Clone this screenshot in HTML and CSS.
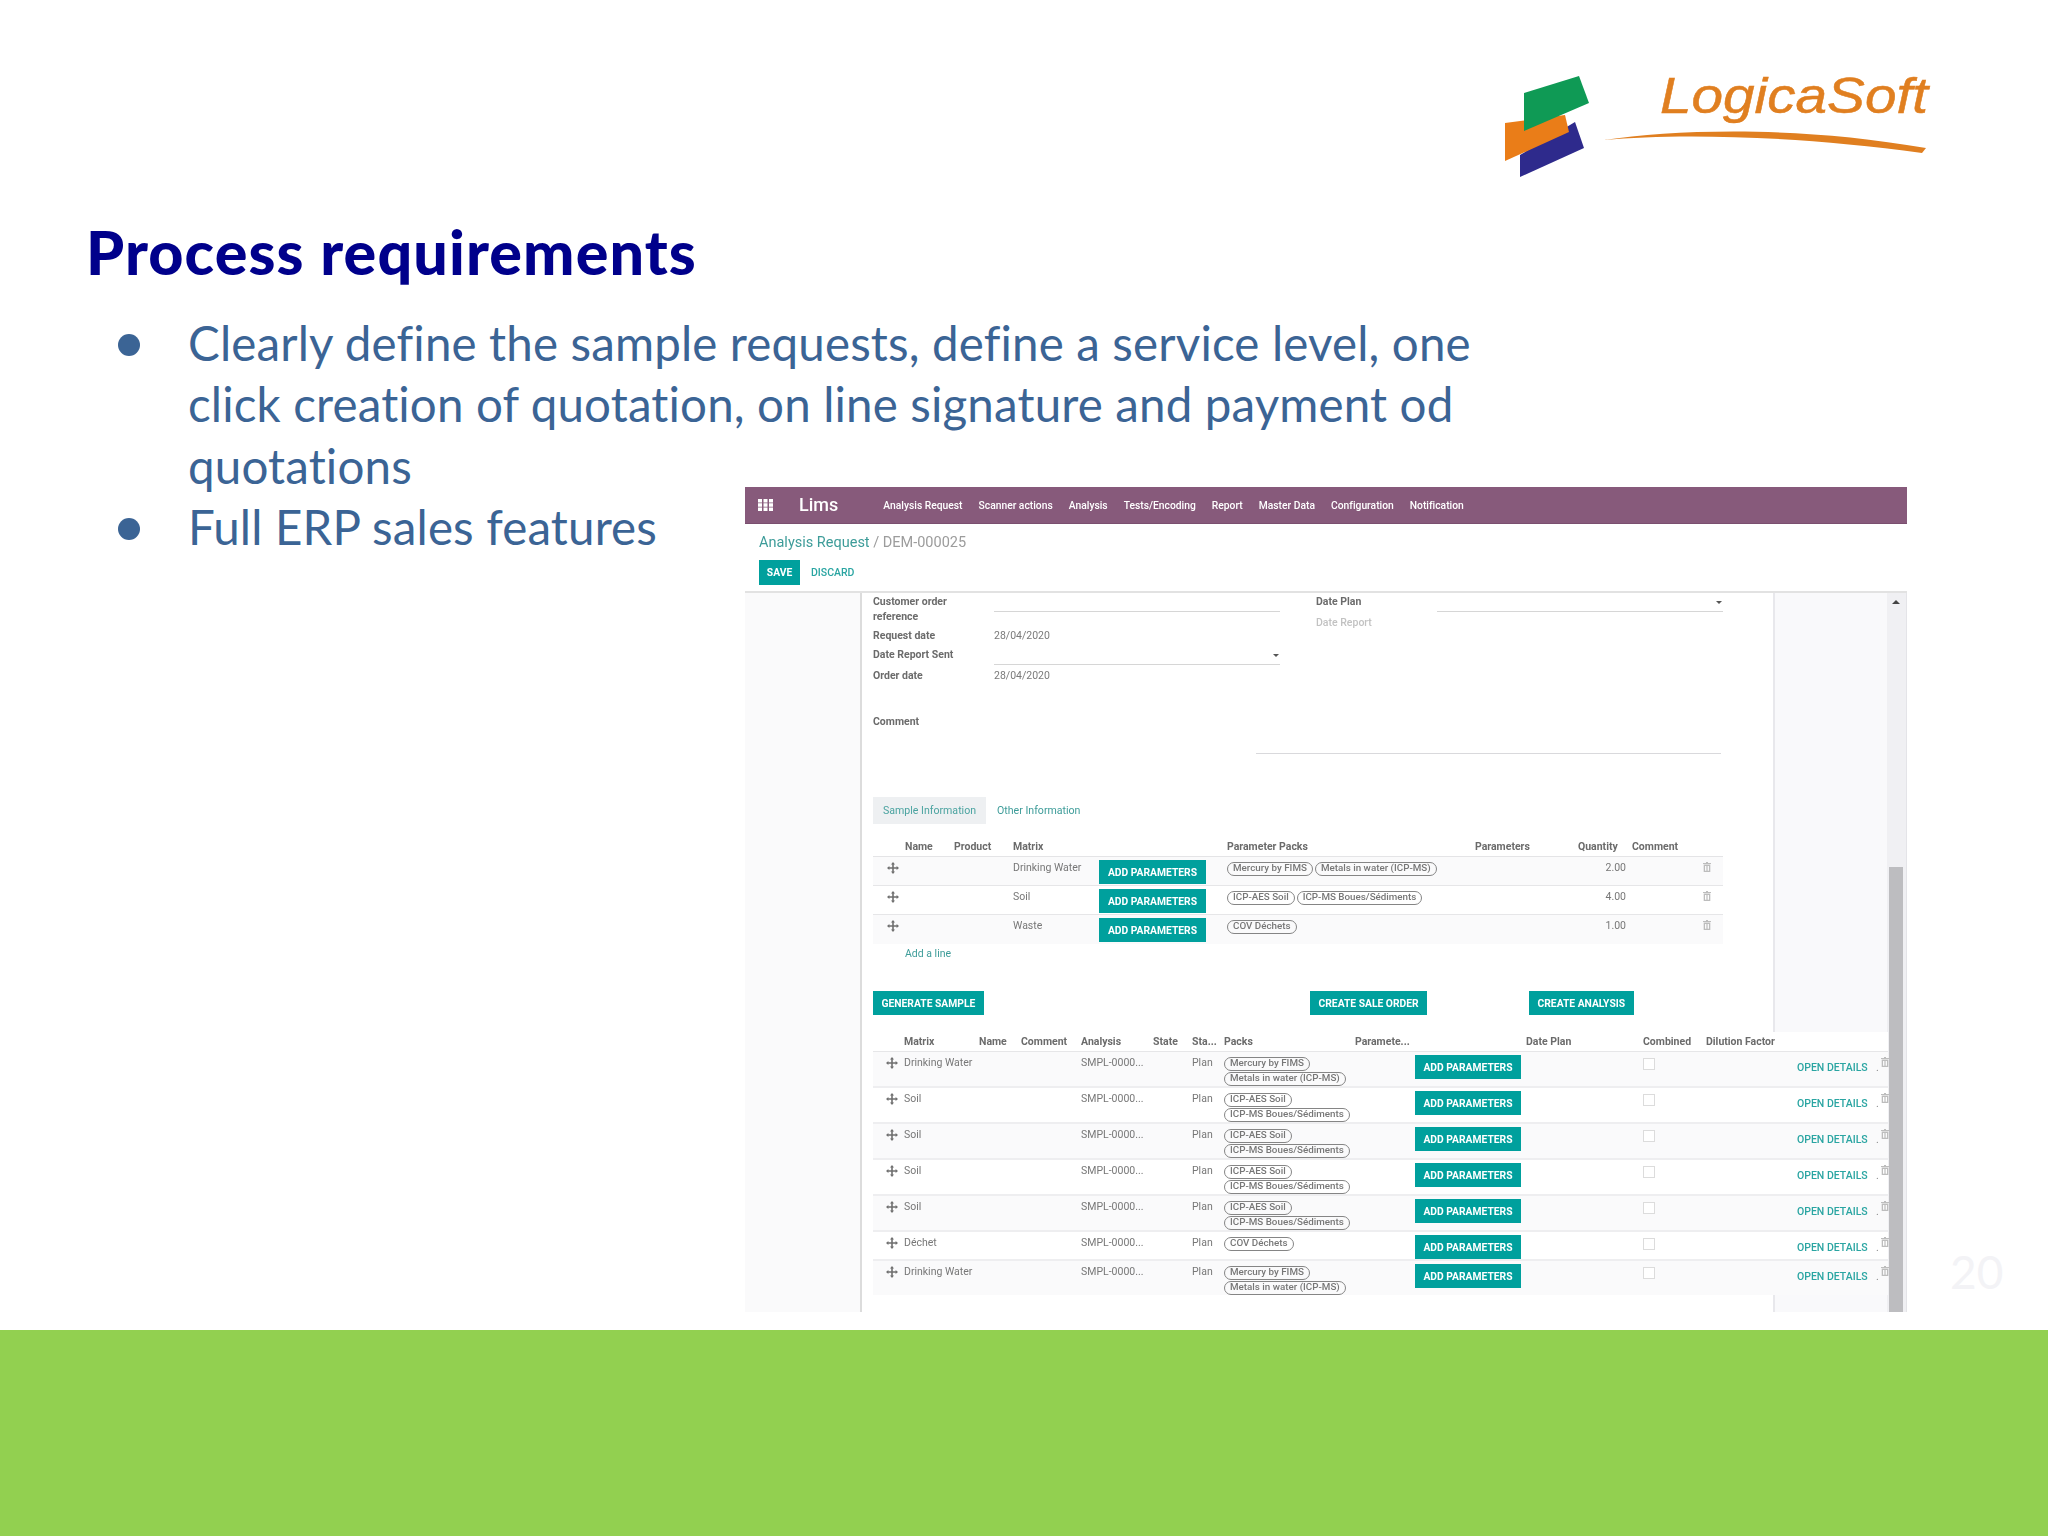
FILE: index.html
```html
<!DOCTYPE html>
<html lang="en">
<head>
<meta charset="utf-8">
<title>Process requirements</title>
<link rel="stylesheet" href="styles.css">
</head>
<body>
<svg class="defs" width="0" height="0" aria-hidden="true">
  <symbol id="move" viewBox="0 0 12 12"><path d="M6 0 8 2.4H6.8V5.2H9.6V4L12 6 9.6 8V6.8H6.8V9.6H8L6 12 4 9.6H5.2V6.8H2.4V8L0 6 2.4 4V5.2H5.2V2.4H4Z"/></symbol>
  <symbol id="trash" viewBox="0 0 8 10"><path d="M3 0H5V1H8V2H0V1H3ZM.7 2.6H7.3V10H.7ZM2 4V8.8H3V4ZM3.6 4V8.8H4.4V4ZM5 4V8.8H6V4Z" fill-rule="evenodd"/></symbol>
</svg>
<main class="slide">
  <section class="stage">
    <div class="logo-row">
      <svg class="logo" viewBox="0 0 440 115" width="440" height="115" role="img" aria-label="LogicaSoft">
        <polygon points="75,52 84,78 20,107 20,85" fill="#2e2a8c"/>
        <polygon points="5,53 65,45 69,62 5,91" fill="#ea7d18"/>
        <polygon points="24,23 79,6 89,33 24,61" fill="#0f9a55"/>
        <text x="160" y="43" class="logo-text" textLength="268" lengthAdjust="spacingAndGlyphs">LogicaSoft</text>
        <path d="M104 70C180 59 300 56 426 78L422 83C300 66 180 63 104 70Z" fill="#e07f20"/>
      </svg>
    </div>
    <h1 class="title">Process requirements</h1>
    <ul class="points">
      <li class="point">Clearly define the sample requests, define a service level, one<br>click creation of quotation, on line signature and payment od<br>quotations</li>
      <li class="point">Full ERP sales features</li>
    </ul>

    <div class="window">
      <nav class="navbar">
        <svg class="apps" viewBox="0 0 15 12" width="15" height="12"><path d="M0 0h4v3.4H0zM5.5 0h4v3.4h-4zM11 0h4v3.4h-4zM0 4.3h4v3.4H0zM5.5 4.3h4v3.4h-4zM11 4.3h4v3.4h-4zM0 8.6h4V12H0zM5.5 8.6h4V12h-4zM11 8.6h4V12h-4z" fill="#fff"/></svg>
        <span class="brand">Lims</span>
        <span class="menu">Analysis Request</span>
        <span class="menu">Scanner actions</span>
        <span class="menu">Analysis</span>
        <span class="menu">Tests/Encoding</span>
        <span class="menu">Report</span>
        <span class="menu">Master Data</span>
        <span class="menu">Configuration</span>
        <span class="menu">Notification</span>
      </nav>
      <div class="control">
        <div class="crumbs"><span class="crumb-link">Analysis Request</span> / DEM-000025</div>
        <div class="actions"><span class="btn btn-save">SAVE</span><span class="discard">DISCARD</span></div>
      </div>
      <div class="view">
        <div class="gutter-left"></div>
        <div class="sheet">
          <div class="form">
            <div class="form-col">
              <div class="f-row f-row-a"><span class="label">Customer order<br>reference</span><span class="field field-line"></span></div>
              <div class="f-row f-row-b"><span class="label">Request date</span><span class="value">28/04/2020</span></div>
              <div class="f-row f-row-b"><span class="label">Date Report Sent</span><span class="field field-line field-drop"><i class="caret"></i></span></div>
              <div class="f-row f-row-c"><span class="label">Order date</span><span class="value">28/04/2020</span></div>
            </div>
            <div class="form-col">
              <div class="f-row f-row-d"><span class="label">Date Plan</span><span class="field field-line field-drop"><i class="caret"></i></span></div>
              <div class="f-row"><span class="label label-muted">Date Report</span></div>
            </div>
          </div>
          <div class="comment"><span class="label">Comment</span><span class="comment-line"></span></div>
          <div class="tabs"><span class="tab tab-active">Sample Information</span><span class="tab">Other Information</span></div>

          <div class="tbl-a">
            <div class="ra ra-head"><span></span><span>Name</span><span>Product</span><span>Matrix</span><span></span><span>Parameter Packs</span><span>Parameters</span><span>Quantity</span><span>Comment</span><span></span></div>
            <div class="ra ra-row"><svg class="move"><use href="#move"/></svg><span></span><span></span><span class="txt">Drinking Water</span><span class="btn btn-add">ADD PARAMETERS</span><span class="pills-inline"><span class="pill">Mercury by FIMS</span><span class="pill">Metals in water (ICP-MS)</span></span><span></span><span class="txt num">2.00</span><span></span><svg class="trash"><use href="#trash"/></svg></div>
            <div class="ra ra-row"><svg class="move"><use href="#move"/></svg><span></span><span></span><span class="txt">Soil</span><span class="btn btn-add">ADD PARAMETERS</span><span class="pills-inline"><span class="pill">ICP-AES Soil</span><span class="pill">ICP-MS Boues/Sédiments</span></span><span></span><span class="txt num">4.00</span><span></span><svg class="trash"><use href="#trash"/></svg></div>
            <div class="ra ra-row"><svg class="move"><use href="#move"/></svg><span></span><span></span><span class="txt">Waste</span><span class="btn btn-add">ADD PARAMETERS</span><span class="pills-inline"><span class="pill">COV Déchets</span></span><span></span><span class="txt num">1.00</span><span></span><svg class="trash"><use href="#trash"/></svg></div>
            <div class="add-line">Add a line</div>
          </div>

          <div class="gen-row"><span class="btn btn-gen">GENERATE SAMPLE</span><span class="btn btn-gen">CREATE SALE ORDER</span><span class="btn btn-gen">CREATE ANALYSIS</span></div>

          <div class="tbl-b">
            <div class="rb rb-head"><span></span><span>Matrix</span><span>Name</span><span>Comment</span><span>Analysis</span><span>State</span><span>Sta...</span><span>Packs</span><span>Paramete...</span><span></span><span>Date Plan</span><span>Combined</span><span>Dilution Factor</span></div>
            <div class="rb rb-row"><svg class="move"><use href="#move"/></svg><span class="txt">Drinking Water</span><span></span><span></span><span class="txt">SMPL-0000...</span><span></span><span class="txt">Plan</span><span class="pills"><span class="pill">Mercury by FIMS</span><span class="pill">Metals in water (ICP-MS)</span></span><span></span><span class="btn btn-add">ADD PARAMETERS</span><span></span><i class="check"></i><span></span><span class="open">OPEN DETAILS</span><span class="dot">.</span><svg class="trash"><use href="#trash"/></svg></div>
            <div class="rb rb-row"><svg class="move"><use href="#move"/></svg><span class="txt">Soil</span><span></span><span></span><span class="txt">SMPL-0000...</span><span></span><span class="txt">Plan</span><span class="pills"><span class="pill">ICP-AES Soil</span><span class="pill">ICP-MS Boues/Sédiments</span></span><span></span><span class="btn btn-add">ADD PARAMETERS</span><span></span><i class="check"></i><span></span><span class="open">OPEN DETAILS</span><span class="dot">.</span><svg class="trash"><use href="#trash"/></svg></div>
            <div class="rb rb-row"><svg class="move"><use href="#move"/></svg><span class="txt">Soil</span><span></span><span></span><span class="txt">SMPL-0000...</span><span></span><span class="txt">Plan</span><span class="pills"><span class="pill">ICP-AES Soil</span><span class="pill">ICP-MS Boues/Sédiments</span></span><span></span><span class="btn btn-add">ADD PARAMETERS</span><span></span><i class="check"></i><span></span><span class="open">OPEN DETAILS</span><span class="dot">.</span><svg class="trash"><use href="#trash"/></svg></div>
            <div class="rb rb-row"><svg class="move"><use href="#move"/></svg><span class="txt">Soil</span><span></span><span></span><span class="txt">SMPL-0000...</span><span></span><span class="txt">Plan</span><span class="pills"><span class="pill">ICP-AES Soil</span><span class="pill">ICP-MS Boues/Sédiments</span></span><span></span><span class="btn btn-add">ADD PARAMETERS</span><span></span><i class="check"></i><span></span><span class="open">OPEN DETAILS</span><span class="dot">.</span><svg class="trash"><use href="#trash"/></svg></div>
            <div class="rb rb-row"><svg class="move"><use href="#move"/></svg><span class="txt">Soil</span><span></span><span></span><span class="txt">SMPL-0000...</span><span></span><span class="txt">Plan</span><span class="pills"><span class="pill">ICP-AES Soil</span><span class="pill">ICP-MS Boues/Sédiments</span></span><span></span><span class="btn btn-add">ADD PARAMETERS</span><span></span><i class="check"></i><span></span><span class="open">OPEN DETAILS</span><span class="dot">.</span><svg class="trash"><use href="#trash"/></svg></div>
            <div class="rb rb-row"><svg class="move"><use href="#move"/></svg><span class="txt">Déchet</span><span></span><span></span><span class="txt">SMPL-0000...</span><span></span><span class="txt">Plan</span><span class="pills"><span class="pill">COV Déchets</span></span><span></span><span class="btn btn-add">ADD PARAMETERS</span><span></span><i class="check"></i><span></span><span class="open">OPEN DETAILS</span><span class="dot">.</span><svg class="trash"><use href="#trash"/></svg></div>
            <div class="rb rb-row"><svg class="move"><use href="#move"/></svg><span class="txt">Drinking Water</span><span></span><span></span><span class="txt">SMPL-0000...</span><span></span><span class="txt">Plan</span><span class="pills"><span class="pill">Mercury by FIMS</span><span class="pill">Metals in water (ICP-MS)</span></span><span></span><span class="btn btn-add">ADD PARAMETERS</span><span></span><i class="check"></i><span></span><span class="open">OPEN DETAILS</span><span class="dot">.</span><svg class="trash"><use href="#trash"/></svg></div>
          </div>
        </div>
        <div class="gutter-right"></div>
        <div class="scrollbar"><i class="scroll-up"></i><div class="thumb"></div></div>
      </div>
    </div>
    <span class="page-no">20</span>
  </section>
  <footer class="band"></footer>
</main>
</body>
</html>
```

FILE: styles.css
```css
* { box-sizing: border-box; }
html, body { margin: 0; padding: 0; background: #fff; }
.defs { position: absolute; }

.slide { width: 2048px; height: 1536px; display: flex; flex-direction: column; overflow: hidden; font-family: Lato, "Liberation Sans", sans-serif; font-variant-ligatures: none; }
.stage { height: 1330px; position: relative; background: #fff; }
.band { flex: 1; background: #92d050; }

.logo-row { display: flex; justify-content: flex-end; padding: 70px 108px 0 0; height: 185px; }
.logo { display: block; overflow: visible; }
.logo-text { font-family: "Liberation Sans", sans-serif; font-style: italic; font-size: 50px; fill: #e07f20; stroke: #e07f20; stroke-width: .5px; }

.title { margin: 32px 0 0 86px; font-size: 61px; line-height: 70px; font-weight: 900; color: #00008b; letter-spacing: 1.1px; }
.points { list-style: none; margin: 25px 0 0; padding: 0 0 0 188px; font-size: 47.5px; line-height: 61.4px; letter-spacing: .15px; color: #3b6495; }
.point { position: relative; }
.point::before { content: ""; position: absolute; left: -70px; top: 22px; width: 22px; height: 22px; border-radius: 50%; background: #3b6495; }

.page-no { position: absolute; left: 1950px; top: 1244px; font-size: 46px; line-height: 56px; color: #f3f3f6; }

.window { position: absolute; left: 745px; top: 487px; width: 1162px; height: 826px; display: flex; flex-direction: column; background: #fff; font-family: Roboto, "Liberation Sans", sans-serif; filter: blur(.45px); }

.navbar { height: 37px; background: #875a7b; display: flex; align-items: center; padding-left: 13px; color: #fff; border-bottom: 1px solid #7a4f6f; }
.apps { display: block; }
.brand { font-size: 18px; line-height: 22px; font-weight: 500; margin: 0 45px 0 26px; }
.menu { font-size: 10.3px; font-weight: 500; margin-right: 16px; }

.control { height: 69px; padding: 10px 0 0 14px; border-bottom: 2px solid #e2e2e2; }
.crumbs { font-size: 14.5px; line-height: 18px; color: #9c9c9c; }
.crumb-link { color: #3d9c99; }
.actions { display: flex; align-items: center; margin-top: 8px; }
.btn { display: flex; align-items: center; justify-content: center; background: #00a09d; color: #fff; font-size: 10.3px; font-weight: 700; white-space: nowrap; }
.btn-save { width: 41px; height: 25px; }
.discard { margin-left: 11px; font-size: 10.5px; font-weight: 500; color: #2aa5a2; }

.view { height: 719px; display: grid; grid-template-columns: 115px 913px 114px 20px; }
.gutter-left { background: #fafafb; }
.gutter-right { background: #f9f9fb; border-left: 2px solid #e8e8ec; }
.sheet { z-index: 1; border-left: 2px solid #dcdcdc; padding-left: 11px; font-size: 10.5px; color: #777; }

.scrollbar { background: #f0f0f3; padding: 0 0 0 2px; border-right: 1px solid #e4e4e8; }
.scroll-up { display: block; width: 0; height: 0; margin: 7px 0 0 3px; border: 4px solid transparent; border-top: 0; border-bottom: 4px solid #444; }
.thumb { margin-top: 263px; width: 14px; height: 445px; background: #bdbdc0; }

.form { display: flex; gap: 36px; }
.form-col { display: flex; flex-direction: column; }
.form-col:first-child { width: 407px; }
.form-col:last-child { width: 407px; }
.f-row { display: flex; align-items: flex-start; }
.f-row-a { height: 33px; padding-top: 1px; }
.f-row-b { height: 19px; padding-top: 2px; }
.f-row-c { height: 21px; padding-top: 4px; }
.f-row-d { height: 22px; padding-top: 1px; }
.label { width: 121px; flex: none; font-size: 10.5px; line-height: 15px; font-weight: 700; color: #6b6b6b; }
.label-muted { font-weight: 500; color: #c2c2c2; }
.value { line-height: 15px; color: #7a7a7a; }
.field { flex: 1; }
.field-line { height: 18px; border-bottom: 1px solid #d6d6d6; margin-top: 0; }
.field-drop { display: flex; justify-content: flex-end; }
.caret { width: 0; height: 0; margin: 7px 1px 0 0; border: 3px solid transparent; border-top: 3px solid #555; border-bottom: 0; }

.comment { display: flex; margin-top: 29px; }
.comment .label { width: 383px; }
.comment-line { flex: 1; height: 40px; margin-right: 52px; border-bottom: 1px solid #d9d9dc; }

.tabs { display: flex; margin-top: 43px; height: 27px; font-size: 10.6px; color: #3d9c99; }
.tab { display: flex; align-items: center; padding: 0 11px; }
.tab-active { width: 113px; justify-content: center; padding: 0; background: #eef0f2; color: #4aa3a0; }

.tbl-a { width: 850px; margin-top: 13px; }
.ra { display: grid; grid-template-columns: 32px 49px 59px 86px 128px 248px 103px 54px 68px 23px; align-items: start; }
.ra-head { height: 20px; align-items: center; font-weight: 700; color: #6b6b6b; border-bottom: 1px solid #e4e4e6; }
.ra-row { height: 29px; border-bottom: 1px solid #e6e6e8; }
.ra-row:nth-child(even) { background: #fafafb; }
.ra-row:nth-last-child(2) { border-bottom: 0; }
.txt { padding-top: 4px; line-height: 14px; white-space: nowrap; }
.num { text-align: right; padding-right: 6px; }
.move { width: 12px; height: 12px; margin: 5px 0 0 14px; fill: #6f6f6f; }
.ra-row .btn-add { margin-top: 3px; }
.btn-add { width: 107px; height: 24px; }
.trash { width: 8px; height: 10px; margin: 5px 0 0 3px; fill: #bdbdbd; }
.pills-inline { display: flex; gap: 2px; padding-top: 5px; }
.pills { display: flex; flex-direction: column; align-items: flex-start; gap: 1px; padding: 5px 0 0; }
.pill { display: block; height: 14px; padding: 0 5px; border: 1.8px solid #858585; border-radius: 7px; font-size: 9.8px; font-weight: 500; line-height: 10.5px; color: #777; white-space: nowrap; }
.add-line { height: 20px; padding-left: 32px; line-height: 20px; color: #3d9c99; }

.gen-row { display: grid; grid-template-columns: 437px 219px auto; margin-top: 27px; height: 24px; }
.btn-gen { height: 24px; justify-self: start; padding: 0 8.5px; }

.tbl-b { width: 1015px; margin-top: 17px; background: #fff; }
.rb { display: grid; grid-template-columns: 31px 75px 42px 60px 72px 39px 32px 131px 60px 111px 117px 63px 91px 79px 8px 4px; align-items: start; }
.rb-head { height: 20px; align-items: center; font-weight: 700; color: #6b6b6b; border-bottom: 1px solid #e6e6e8; white-space: nowrap; }
.rb-row { min-height: 29px; border-bottom: 2px solid #eeeef0; }
.rb-row:nth-child(even) { background: #fafafb; }
.rb-row:last-child { border-bottom: 0; }
.rb-row .btn-add { width: 106px; margin-top: 3px; }
.rb-row .move { margin-left: 13px; }
.rb-row .trash { margin-left: -3px; }
.check { display: block; width: 12px; height: 12px; margin-top: 6px; border: 1px solid #dcdcdc; background: #fff; }
.open { padding-top: 9px; line-height: 14px; font-weight: 500; color: #2aa5a2; white-space: nowrap; }
.dot { padding-top: 9px; line-height: 14px; color: #888; }
```
